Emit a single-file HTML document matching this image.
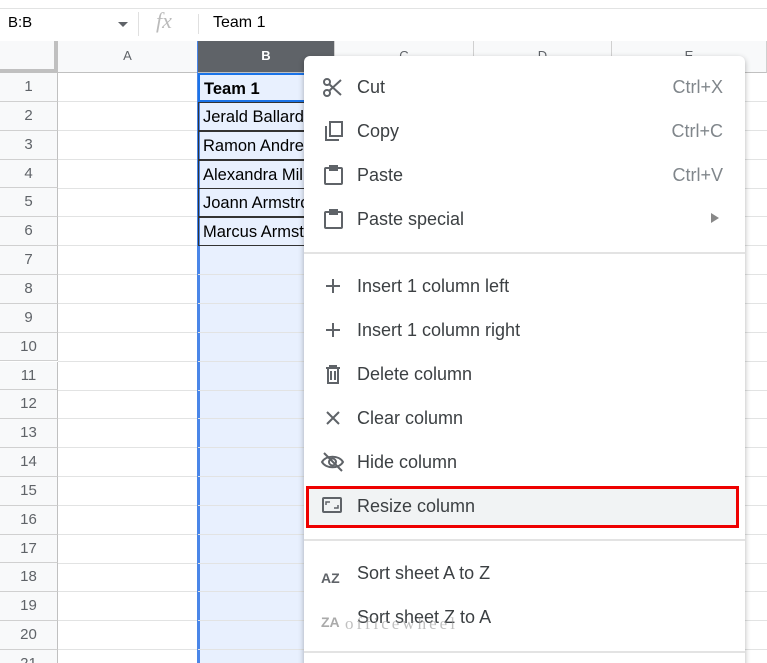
<!DOCTYPE html>
<html><head><meta charset="utf-8"><style>
html,body{margin:0;width:767px;height:663px;overflow:hidden}
body{background:#fff;font-family:"Liberation Sans",Arial,sans-serif;position:relative}
.a{position:absolute}
.fb{left:0;top:8px;width:767px;height:32px;border-top:1px solid #e2e3e3;border-bottom:1px solid #d0d0d0;background:#fff}
.rn{left:0;width:58px;background:#f8f9fa;color:#5f6368;font-size:15px;text-align:center;border-right:1px solid #c0c0c0;box-sizing:border-box}
.hl{height:1px;background:#e2e3e3;left:58px;width:709px}
.ch{top:41px;height:32px;background:#f8f9fa;color:#5f6368;font-size:13px;text-align:center;line-height:30px;border-right:1px solid #d0d0d0;border-bottom:1px solid #c0c0c0;box-sizing:border-box}
.cell{left:198px;width:137px;height:29px;font-size:16.5px;color:#000;line-height:29px;padding-left:4px;box-sizing:border-box;border:1px solid #333;white-space:nowrap;overflow:hidden}
.menu{left:304px;top:56px;width:441px;height:620px;background:#fff;border-radius:6px;box-shadow:0 2px 6px rgba(0,0,0,.3)}
.it{left:357px;font-size:18px;color:#3c4043;line-height:20px}
.sc{right:44px;font-size:18px;color:#80868b}
.sep{left:304px;width:441px;height:2px;background:#e3e3e3}
</style></head><body>
<div class="a fb"></div>
<div class="a" style="left:8px;top:14px;font-size:15px;color:#000">B:B</div>
<div class="a" style="left:118px;top:22px;border-left:5px solid transparent;border-right:5px solid transparent;border-top:5px solid #5f6368"></div>
<div class="a" style="left:138px;top:12px;width:1px;height:24px;background:#e0e0e0"></div>
<div class="a" style="left:156px;top:8px;font-family:'Liberation Serif',serif;font-style:italic;font-size:22px;color:#bbb">fx</div>
<div class="a" style="left:198px;top:14px;width:1px;height:20px;background:#e0e0e0"></div>
<div class="a" style="left:213px;top:14px;font-size:16px;color:#000">Team 1</div>

<div class="a" style="left:0;top:41px;width:58px;height:32px;background:#f8f9fa;border-right:4px solid #c0c0c0;border-bottom:4px solid #c0c0c0;box-sizing:border-box"></div>
<div class="a ch" style="left:58px;width:140px">A</div>
<div class="a ch" style="left:198px;width:137px;background:#5f6368;color:#fff;font-weight:bold">B</div>
<div class="a ch" style="left:335px;width:139px">C</div>
<div class="a ch" style="left:474px;width:138px">D</div>
<div class="a ch" style="left:612px;width:155px">E</div>

<div class="a" style="left:198px;top:73px;width:137px;height:590px;background:#e8f0fe;border-left:2px solid #4a86e8;box-sizing:border-box"></div>
<div id="rows"></div>
<script>
var h='';for(var i=1;i<=21;i++){var t=73+(i-1)*28.85;h+='<div class="a rn" style="top:'+t+'px;height:28.85px;line-height:28px;border-bottom:1px solid #d0d0d0">'+i+'</div><div class="a hl" style="top:'+(t+28)+'px"></div>';}
document.getElementById('rows').innerHTML=h;
</script>
<div class="a" style="left:197px;top:41px;width:1px;height:622px;background:#4a86e8"></div>
<div class="a cell" style="top:73px;font-weight:bold;border:2px solid #1a73e8">Team 1</div>
<div class="a cell" style="top:102px">Jerald Ballard</div>
<div class="a cell" style="top:131px">Ramon Andrews</div>
<div class="a cell" style="top:160px">Alexandra Mills</div>
<div class="a cell" style="top:188px">Joann Armstrong</div>
<div class="a cell" style="top:217px">Marcus Armstrong</div>

<div class="a menu"></div>
<div class="a it" style="top:77px">Cut</div><div class="a sc" style="top:77px">Ctrl+X</div>
<div class="a it" style="top:121px">Copy</div><div class="a sc" style="top:121px">Ctrl+C</div>
<div class="a it" style="top:165px">Paste</div><div class="a sc" style="top:165px">Ctrl+V</div>
<div class="a it" style="top:209px">Paste special</div><div class="a" style="left:711px;top:213px;border-top:5px solid transparent;border-bottom:5px solid transparent;border-left:8px solid #888"></div>
<div class="a sep" style="top:252px"></div>
<div class="a it" style="top:276px">Insert 1 column left</div>
<div class="a it" style="top:320px">Insert 1 column right</div>
<div class="a it" style="top:364px">Delete column</div>
<div class="a it" style="top:408px">Clear column</div>
<div class="a it" style="top:452px">Hide column</div>
<div class="a" style="left:306px;top:486px;width:433px;height:42px;background:#f1f3f4;border:3px solid #e00;box-sizing:border-box"></div>
<div class="a it" style="top:496px">Resize column</div>
<div class="a sep" style="top:539px"></div>
<div class="a it" style="top:563px">Sort sheet A to Z</div>
<div class="a it" style="top:607px">Sort sheet Z to A</div>
<div class="a sep" style="top:651px"></div>

<svg class="a" style="left:0;top:0" width="767" height="663" fill="none" stroke="#5f6368" stroke-width="2">
<g transform="translate(323,78)"><circle cx="4" cy="4" r="3"/><circle cx="4" cy="15" r="3"/><path d="M6 6L18 17M6 13L18 2"/></g>
<g transform="translate(324,121)"><path d="M2 5v14h13"/><rect x="6" y="1" width="12" height="14"/></g>
<g transform="translate(324,164)"><rect x="1" y="4" width="17" height="16" rx="1"/><rect x="6" y="2" width="7" height="4" fill="#5f6368"/></g>
<g transform="translate(324,208)"><rect x="1" y="4" width="17" height="16" rx="1"/><rect x="6" y="2" width="7" height="4" fill="#5f6368"/></g>
<path d="M333 279v14M326 286h14M333 323v14M326 330h14"/>
<g transform="translate(326,365)"><path d="M0 3h14M4 3V1h6v2M2 3v15h10V3M5 6v9M9 6v9"/></g>
<path d="M327 412l12 12M339 412l-12 12"/>
<g transform="translate(321,452)"><path d="M1 10c4-7 17-7 21 0c-4 7-17 7-21 0z"/><circle cx="11.5" cy="10" r="3.5"/><path d="M3 1l18 18"/></g>
<g transform="translate(322,497)"><rect x="1" y="1" width="18" height="14" rx="1"/><path d="M4 8V5h4M16 8v3h-4" stroke-width="1.5"/></g>
<text x="321" y="583" fill="#5f6368" stroke="none" font-family="Liberation Sans" font-size="14" font-weight="bold">AZ</text>
<text x="321" y="627" fill="#aaa" stroke="none" font-family="Liberation Sans" font-size="14" font-weight="bold">ZA</text>
</svg>
<div class="a" style="left:345px;top:614px;font-family:'Liberation Serif',serif;font-size:17px;letter-spacing:3px;color:rgba(150,150,150,.6)">officewheel</div>
</body></html>
